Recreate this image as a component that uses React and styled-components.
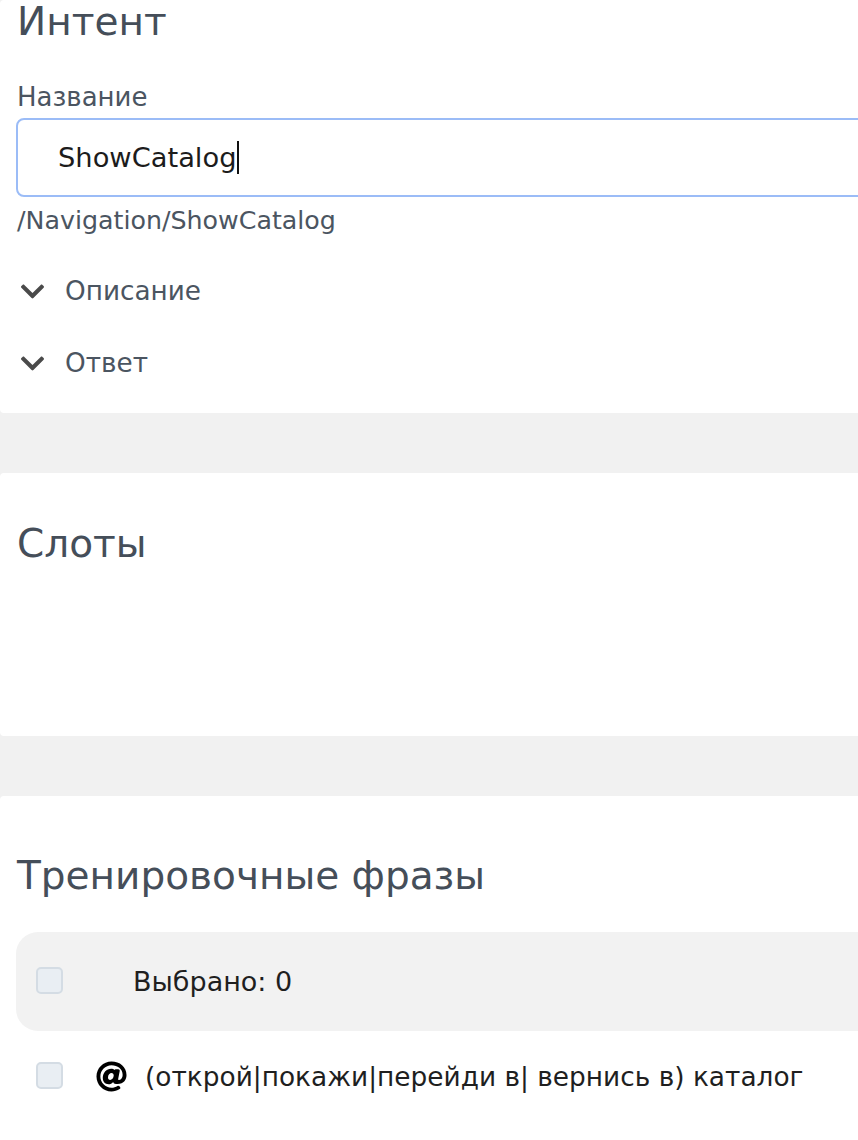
import React from 'react';
import styled, { createGlobalStyle } from 'styled-components';
import { FaChevronDown, FaAt } from 'react-icons/fa';

const GlobalStyle = createGlobalStyle`
  html, body {
    margin: 0;
    padding: 0;
    background: #f1f1f1;
    overflow-x: hidden;
  }
  body {
    font-family: "DejaVu Sans", Verdana, sans-serif;
    color: #46505b;
  }
`;

const Page = styled.div`
  width: 900px;
  display: flex;
  flex-direction: column;
  gap: 60px;
`;

const Card = styled.section`
  background: #ffffff;
  border-radius: 4px;
  padding: ${p => p.$pad || '0 0 14px 17px'};
  min-height: ${p => p.$minHeight || 'auto'};
  box-sizing: border-box;
`;

const Heading = styled.h2`
  margin: 0;
  font-size: 39px;
  line-height: 44px;
  font-weight: normal;
  color: #454e59;
`;

const Label = styled.div`
  margin-top: 37px;
  font-size: 26px;
  line-height: 32px;
  color: #4b5561;
`;

const InputBox = styled.div`
  margin: 5px 0 0 -1px;
  height: 79px;
  box-sizing: border-box;
  border: 2px solid #9bbcf7;
  border-radius: 8px;
  display: flex;
  align-items: center;
  padding-left: 40px;
  font-size: 27.3px;
  color: #1c1c1c;
`;

const Caret = styled.span`
  display: inline-block;
  width: 2px;
  height: 33px;
  background: #111;
  margin-left: 1px;
`;

const Helper = styled.div`
  margin-top: 9px;
  font-size: 25.3px;
  line-height: 30px;
  color: #4b5561;
`;

const Accordion = styled.div`
  margin-top: 19px;
  display: flex;
  flex-direction: column;
`;

const AccordionRow = styled.div`
  display: flex;
  align-items: center;
  gap: 19px;
  padding: 20px 0;
  font-size: 26.3px;
  line-height: 32px;
  color: #4b5561;

  svg {
    width: 27px;
    height: 27px;
    color: #4a4a4a;
    margin-left: 2px;
  }
`;

const SelectBar = styled.div`
  margin: 34px 0 0 -1px;
  height: 99px;
  background: #f2f2f2;
  border-radius: 22px;
  display: flex;
  align-items: center;
  padding-left: 20px;
  gap: 70px;
  font-size: 27px;
  color: #1f1f1f;
`;

const Checkbox = styled.span`
  width: 27px;
  height: 27px;
  box-sizing: border-box;
  border: 2px solid #d4dce4;
  background: #e9eef3;
  border-radius: 5px;
  flex: none;
  margin-top: -3px;
`;

const PhraseRow = styled.div`
  margin-top: 30px;
  display: flex;
  align-items: center;
  padding-left: 19px;
  font-size: 26.4px;
  color: #1f1f1f;
`;

const AtIcon = styled(FaAt)`
  width: 31px;
  height: 31px;
  color: #000;
  margin: 0 18px 0 33px;
`;

export default function App() {
  return (
    <>
      <GlobalStyle />
      <Page>
        <Card>
          <Heading>Интент</Heading>
          <Label>Название</Label>
          <InputBox>
            ShowCatalog<Caret />
          </InputBox>
          <Helper>/Navigation/ShowCatalog</Helper>
          <Accordion>
            <AccordionRow>
              <FaChevronDown />
              Описание
            </AccordionRow>
            <AccordionRow>
              <FaChevronDown />
              Ответ
            </AccordionRow>
          </Accordion>
        </Card>
        <Card $pad="49px 0 0 17px" $minHeight="263px">
          <Heading>Слоты</Heading>
        </Card>
        <Card $pad="58px 0 60px 17px">
          <Heading>Тренировочные фразы</Heading>
          <SelectBar>
            <Checkbox />
            Выбрано: 0
          </SelectBar>
          <PhraseRow>
            <Checkbox />
            <AtIcon />
            (открой|покажи|перейди в| вернись в) каталог
          </PhraseRow>
        </Card>
      </Page>
    </>
  );
}
